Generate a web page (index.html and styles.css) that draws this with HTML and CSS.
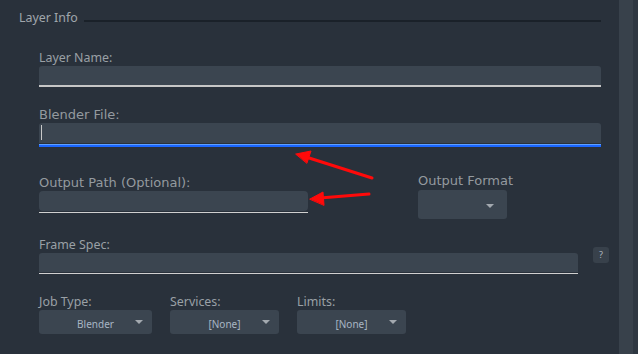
FILE: index.html
```html
<!DOCTYPE html>
<html>
<head>
<meta charset="utf-8">
<link rel="stylesheet" href="styles.css">
</head>
<body>
<div class="window">
  <div class="content">
    <div class="legend">
      <span class="legend-text">Layer Info</span>
      <span class="legend-line"></span>
    </div>
    <div class="fields">
      <div class="field f1">
        <div class="label">Layer Name:</div>
        <div class="input"></div>
        <div class="underline"></div>
      </div>
      <div class="field f2">
        <div class="label dv">Blender File:</div>
        <div class="input"><span class="caret"></span></div>
        <div class="underline focus"></div>
      </div>
      <div class="row r3">
        <div class="field out-path">
          <div class="label dv">Output Path (Optional):</div>
          <div class="input"></div>
          <div class="underline thin"></div>
        </div>
        <div class="field out-format">
          <div class="label dv">Output Format</div>
          <div class="dropdown tall"><span class="dd-text"></span><span class="tri"></span></div>
        </div>
      </div>
      <div class="row r4">
        <div class="field frame">
          <div class="label">Frame Spec:</div>
          <div class="input"></div>
          <div class="underline thin"></div>
        </div>
        <div class="help">?</div>
      </div>
      <div class="row r5">
        <div class="field combo">
          <div class="label">Job Type:</div>
          <div class="dropdown"><span class="dd-text">Blender</span><span class="tri"></span></div>
        </div>
        <div class="field combo">
          <div class="label">Services:</div>
          <div class="dropdown"><span class="dd-text">[None]</span><span class="tri"></span></div>
        </div>
        <div class="field combo">
          <div class="label">Limits:</div>
          <div class="dropdown"><span class="dd-text">[None]</span><span class="tri"></span></div>
        </div>
      </div>
    </div>
  </div>
  <div class="scrollbar"><div class="track"></div><div class="edge"></div></div>
  <svg class="arrows" width="638" height="354" viewBox="0 0 638 354">
    <g stroke="#ff0a0a" stroke-width="3" fill="#ff0a0a" stroke-linecap="round">
      <line x1="372" y1="178" x2="306" y2="157"/>
      <polygon points="296,154 311,151 307,163" stroke-width="1"/>
      <line x1="369" y1="194" x2="320" y2="198"/>
      <polygon points="310,199 323,192 324,205" stroke-width="1"/>
    </g>
  </svg>
</div>
</body>
</html>
```
FILE: styles.css
```css
html, body {
  margin: 0;
  padding: 0;
  background: #29313b;
}
body {
  font-family: "Noto Sans", "DejaVu Sans", sans-serif;
  color: #9da3a9;
}
.window {
  position: relative;
  width: 638px;
  height: 354px;
  display: flex;
  overflow: hidden;
}
.content {
  width: 619px;
  flex-shrink: 0;
  padding: 10px 18px 0 19px;
  box-sizing: border-box;
}
.legend {
  display: flex;
  align-items: flex-start;
  height: 16px;
}
.legend-text {
  font-size: 12.4px;
  line-height: 16px;
  color: #a0a6ac;
}
.legend-line {
  flex: 1;
  height: 2px;
  background: #1a2129;
  margin: 10px 0 0 6px;
}
.fields {
  padding-left: 20px;
  display: flex;
  flex-direction: column;
}
.field {
  display: flex;
  flex-direction: column;
}
.label {
  font-size: 12.4px;
  line-height: 16px;
  height: 16px;
  color: #9aa0a6;
  white-space: nowrap;
}
.label.dv {
  font-family: "DejaVu Sans", sans-serif;
  font-size: 13px;
  color: #949a9f;
}
.input {
  height: 19px;
  background: #3b4550;
  border-radius: 3px 3px 0 0;
  position: relative;
}
.underline {
  height: 2px;
  background: #c6c6c6;
}
.underline.focus {
  height: 3px;
  margin-top: 1px;
  background: linear-gradient(#5fa0ff 0 1px, #1a66ff 1px);
}
.underline.thin {
  height: 1px;
  margin-top: 1px;
  background: #d0d0d0;
}
.f1 { margin-top: 24px; }
.f2 { margin-top: 20px; }
.f2 .input { height: 20px; }
.caret {
  position: absolute;
  left: 2px;
  top: 2px;
  width: 1px;
  height: 15px;
  background: #c8c8c8;
}
.row {
  display: flex;
}
.r3 { margin-top: 26px; }
.out-path { width: 269px; padding-top: 2px; }
.out-path .input { height: 20px; border-radius: 4px; }
.out-format { margin-left: 110px; width: 89px; }
.r4 { margin-top: 18px; }
.frame { width: 539px; flex-shrink: 0; }
.help {
  width: 16px;
  height: 16px;
  flex-shrink: 0;
  margin: 10px 0 0 15px;
  background: #38414b;
  border-radius: 3px;
  font-size: 9px;
  line-height: 16px;
  text-align: center;
  color: #aeb6be;
}
.r5 { margin-top: 20px; gap: 18px; }
.combo { width: 113px; }
.combo + .combo { width: 109px; }
.dropdown {
  height: 24px;
  background: #3b4550;
  border-radius: 3px;
  display: flex;
  align-items: center;
  position: relative;
}
.dropdown.tall { height: 29px; margin-top: 1px; }
.dd-text {
  flex: 1;
  text-align: center;
  font-size: 10px;
  color: #a8b6c4;
  padding-top: 3px;
}
.tri {
  position: absolute;
  right: 9px;
  top: 10px;
  width: 0;
  height: 0;
  border-left: 4px solid transparent;
  border-right: 4px solid transparent;
  border-top: 4px solid #a3a9af;
}
.dropdown.tall .tri { right: 13px; top: 14px; }
.scrollbar {
  display: flex;
  flex: 1;
}
.track {
  width: 14px;
  background: #38414b;
}
.edge {
  flex: 1;
  background: #2e3741;
}
.arrows {
  position: absolute;
  left: 0;
  top: 0;
  pointer-events: none;
}
```
